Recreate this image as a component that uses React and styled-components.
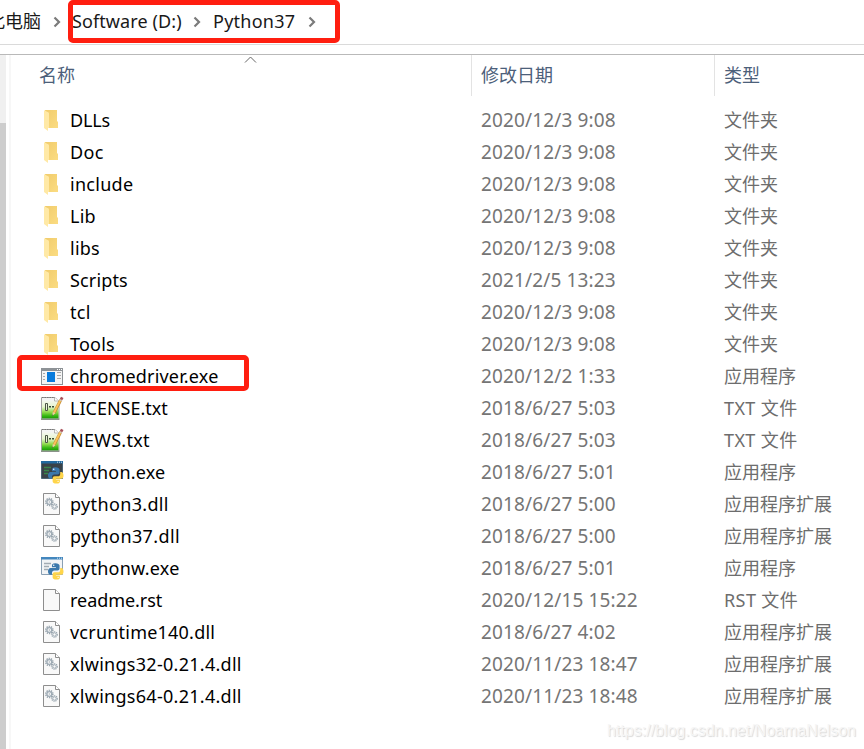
import styled, { createGlobalStyle } from "styled-components";

const GlobalStyle = createGlobalStyle`
  * {
    box-sizing: border-box;
  }
  body {
    margin: 0;
    overflow: hidden;
    background: #fff;
    font-family: "Noto Sans", "Noto Sans CJK SC", sans-serif;
    font-size: 18px;
  }
`;

const Window = styled.div`
  position: relative;
  display: flex;
  flex-direction: column;
  width: 864px;
  height: 749px;
  overflow: hidden;
  background: #fff;
`;

const AddressBar = styled.div`
  display: flex;
  align-items: center;
  height: 45px;
  padding-bottom: 2px;
  border-bottom: 1px solid #dadada;
`;

const Crumb = styled.span`
  flex: none;
  width: ${({ $width }) => $width}px;
  margin-left: ${({ $left }) => $left || 0}px;
  color: #191919;
  line-height: 26px;
  letter-spacing: ${({ $track }) => $track || 0}px;
  white-space: nowrap;
`;

const CrumbArrow = styled.svg`
  flex: none;
  width: 8px;
  height: 12px;
  margin-top: 2px;
`;

const Body = styled.div`
  display: flex;
  flex: 1;
  margin-top: 9px;
  border-top: 1px solid #b9b9b9;
`;

const ScrollTrack = styled.div`
  width: 6px;
  padding-top: 68px;
  background: #f0f0f0;
`;

const ScrollThumb = styled.div`
  height: 100%;
  background: #cdcdcd;
`;

const FileList = styled.div`
  flex: 1;
  margin-left: 3px;
  border-left: 2px solid #f7f7f7;
`;

const HeaderRow = styled.div`
  position: relative;
  display: grid;
  grid-template-columns: 461px 243px 1fr;
  height: 40px;
  margin-bottom: 9px;
`;

const HeaderCell = styled.div`
  padding-left: ${({ $pad }) => $pad}px;
  border-right: ${({ $last }) => ($last ? "none" : "1px solid #e3e3e3")};
  color: #4c607a;
  line-height: 41px;
`;

const SortArrow = styled.svg`
  position: absolute;
  top: 0;
  left: 233px;
  width: 13px;
  height: 9px;
`;

const Row = styled.div`
  display: grid;
  grid-template-columns: 30px 411px 243px 1fr;
  align-items: center;
  height: 32px;
  padding-left: 29px;
  line-height: 32px;
  white-space: nowrap;
`;

const FileIcon = styled.svg`
  width: 24px;
  height: 24px;
`;

const FileName = styled.span`
  color: #000;
  letter-spacing: ${({ $track }) => $track}px;
`;

const Detail = styled.span`
  color: #6d6d6d;
  letter-spacing: ${({ $track }) => $track || 0}px;
`;

const DateText = styled(Detail)`
  color: #757575;
  font-size: 19px;
`;

const Marker = styled.div`
  position: absolute;
  top: ${({ $top }) => $top}px;
  left: ${({ $left }) => $left}px;
  width: ${({ $width }) => $width}px;
  height: ${({ $height }) => $height}px;
  border: 5px solid #ff1e10;
  border-radius: 5px;
`;

const Watermark = styled.span`
  position: absolute;
  right: 8px;
  bottom: 8px;
  color: #f6f6f6;
  font-family: "Liberation Sans", Arial, sans-serif;
  font-size: 16px;
  line-height: 20px;
  text-shadow: 1px 1px 1px #d8d8d8;
`;

function FolderIcon() {
  return (
    <FileIcon viewBox="0 0 24 24">
      <defs>
        <linearGradient id="folderBack" x1="0" y1="0" x2="1" y2="1">
          <stop offset="0" stopColor="#f1cc6c" />
          <stop offset="1" stopColor="#fbdc82" />
        </linearGradient>
      </defs>
      <path d="M5 2h12v11l1 1v6H8z" fill="url(#folderBack)" />
      <path d="M4 2.2 8.2 4.3c.6.3.8.7.8 1.3V20H8v3l-4-3z" fill="#ffe9a6" />
    </FileIcon>
  );
}

function AppIcon() {
  return (
    <FileIcon viewBox="0 0 24 24">
      <rect x="1.5" y="4.5" width="21" height="16" fill="#f4f4f4" stroke="#8d9296" />
      <path d="M1 4h22v3H1z" fill="#8d9296" />
      <path d="M17 5h1v1h-1zM19 5h1v1h-1zM21 5h1v1h-1z" fill="#fff" />
      <path d="M7 8h8v10H7z" fill="#087bdc" />
      <path d="M3 9.5h2M3 12.5h2M3 15.5h2M17 8.5h4M17 11.5h4M17 14.5h4" stroke="#a8a8a8" />
    </FileIcon>
  );
}

function NotepadIcon() {
  return (
    <FileIcon viewBox="0 0 24 24">
      <defs>
        <linearGradient id="notepadGreen" x1="0" y1="0" x2="0" y2="1">
          <stop offset="0" stopColor="#f4f7ef" />
          <stop offset=".35" stopColor="#e6f4d0" />
          <stop offset=".65" stopColor="#8fd94b" />
          <stop offset=".85" stopColor="#36b812" />
          <stop offset="1" stopColor="#1c9606" />
        </linearGradient>
      </defs>
      <path d="M1.500 1.500H15l4 4v17.500H1.500z" fill="#f4f4f4" stroke="#a2a2a2" />
      <path d="M2 4.500h16.500V22.500H2z" fill="url(#notepadGreen)" />
      <path d="M2 1.500h13" stroke="#777" strokeDasharray="1.500 1" />
      <path d="M14.500 1.500v3.500h4" fill="#fff" stroke="#999" strokeWidth=".7" />
      <path d="M1 23.300h18.500" stroke="#7a8478" />
      <path d="M5.500 7.500h2v7h-2z" fill="#e8f3d8" stroke="#4b5544" />
      <path d="M9 10.700h2M12 10.700h2" stroke="#3b4a35" strokeWidth="1.500" />
      <path d="m20.800 3.700-6.600 13" stroke="#c08a35" strokeWidth="3" />
      <path d="m20.600 3.700-6.600 13" stroke="#fbc25a" strokeWidth="1.900" />
      <path d="m19.800 3 1.200-2.300 2.500 1.200-1.200 2.400z" fill="#a8505a" />
      <path d="m19.300 3.700 2.700 1.400" stroke="#c9c9cc" />
      <path d="m12.800 16-.6 4 3.200-2.700z" fill="#ecd0a2" />
      <path d="m12.400 18.500-.3 1.500 1.200-1z" fill="#333" />
    </FileIcon>
  );
}

function PythonIcon({ dark }) {
  return (
    <FileIcon viewBox="0 0 24 24">
      <path
        d="M1.500 1.500h21v17h-21z"
        fill={dark ? "#3a4248" : "#f2f4f6"}
        stroke={dark ? "#4d6474" : "#8aa0b4"}
      />
      <path d="M1 1h22v2.500H1z" fill={dark ? "#22699f" : "#4387be"} />
      <path d="M17 2.200h1M19 2.200h1M21 2.200h1" stroke="#cfe2f0" />
      <path
        d="M4 7.500h7M4 10.500h5M4 13.500h4"
        stroke={dark ? "#39864a" : "#a2abb3"}
        strokeWidth="1.300"
      />
      <g transform="translate(8 7.300) scale(.66)">
        <path
          d="M11 0c-4 0-5 1.500-5 3.500V6h6v1H4C1.500 7 0 9 0 12s1.400 5.500 4 5.500h2v-3c0-2 1.500-3.500 3.500-3.500h5c1.700 0 3-1.400 3-3V3.500C17.500 1.500 15 0 11 0z"
          fill="#3b78ac"
        />
        <path
          d="M13 24.500c4 0 5-1.500 5-3.500v-2.500h-6v-1h8c2.500 0 3.500-2 3.500-5s-1-5.500-3.500-5.500h-1.500v3c0 2-1.500 3.500-3.500 3.500h-5c-1.700 0-3 1.400-3 3V21c0 2 2 3.500 6 3.500z"
          fill="#ffd54a"
        />
        <circle cx="8.700" cy="3.100" r="1.100" fill="#fff" />
        <circle cx="15.300" cy="21.300" r="1.100" fill="#fff" />
      </g>
    </FileIcon>
  );
}

function PageIcon({ gears }) {
  return (
    <FileIcon viewBox="0 0 24 24">
      <path d="M3.500 1.500h12l4 4v17h-16z" fill="#f9f9f9" stroke="#8e8e8e" />
      <path d="M15.500 1.500v4h4" fill="#fff" stroke="#8e8e8e" />
      {gears && (
        <g fill="none">
          <circle cx="9.300" cy="10" r="3.500" stroke="#98a4ad" strokeWidth="1.600" strokeDasharray="1.300 .9" />
          <circle cx="9.300" cy="10" r="2.400" stroke="#9eabb5" strokeWidth="1.300" />
          <circle cx="9.300" cy="10" r=".7" fill="#9eabb5" />
          <circle cx="14.500" cy="14.500" r="2.700" stroke="#98a4ad" strokeWidth="1.300" strokeDasharray="1.200 .8" />
          <circle cx="14.500" cy="14.500" r="1.700" fill="#f9f9f9" stroke="#9eabb5" />
        </g>
      )}
    </FileIcon>
  );
}

const icons = {
  folder: <FolderIcon />,
  app: <AppIcon />,
  notepad: <NotepadIcon />,
  python: <PythonIcon dark />,
  pythonw: <PythonIcon />,
  dll: <PageIcon gears />,
  page: <PageIcon />,
};

const files = [
  { name: "DLLs", date: "2020/12/3 9:08", type: "文件夹", icon: "folder", track: -0.2 },
  { name: "Doc", date: "2020/12/3 9:08", type: "文件夹", icon: "folder", track: 0.3 },
  { name: "include", date: "2020/12/3 9:08", type: "文件夹", icon: "folder", track: 0.28 },
  { name: "Lib", date: "2020/12/3 9:08", type: "文件夹", icon: "folder", track: 0.2 },
  { name: "libs", date: "2020/12/3 9:08", type: "文件夹", icon: "folder", track: 0.25 },
  { name: "Scripts", date: "2021/2/5 13:23", type: "文件夹", icon: "folder", track: 0.15 },
  { name: "tcl", date: "2020/12/3 9:08", type: "文件夹", icon: "folder", track: 0.3 },
  { name: "Tools", date: "2020/12/3 9:08", type: "文件夹", icon: "folder", track: 0.2 },
  { name: "chromedriver.exe", date: "2020/12/2 1:33", type: "应用程序", icon: "app", track: 0.18 },
  { name: "LICENSE.txt", date: "2018/6/27 5:03", type: "TXT 文件", icon: "notepad", track: 0 },
  { name: "NEWS.txt", date: "2018/6/27 5:03", type: "TXT 文件", icon: "notepad", track: 0.25 },
  { name: "python.exe", date: "2018/6/27 5:01", type: "应用程序", icon: "python", track: 0.2 },
  { name: "python3.dll", date: "2018/6/27 5:00", type: "应用程序扩展", icon: "dll", track: 0.35 },
  { name: "python37.dll", date: "2018/6/27 5:00", type: "应用程序扩展", icon: "dll", track: 0.4 },
  { name: "pythonw.exe", date: "2018/6/27 5:01", type: "应用程序", icon: "pythonw", track: 0.25 },
  { name: "readme.rst", date: "2020/12/15 15:22", type: "RST 文件", icon: "page", track: -0.05 },
  { name: "vcruntime140.dll", date: "2018/6/27 4:02", type: "应用程序扩展", icon: "dll", track: 0.22 },
  { name: "xlwings32-0.21.4.dll", date: "2020/11/23 18:47", type: "应用程序扩展", icon: "dll", track: 0.28 },
  { name: "xlwings64-0.21.4.dll", date: "2020/11/23 18:48", type: "应用程序扩展", icon: "dll", track: 0.28 },
];

function Arrow() {
  return (
    <CrumbArrow viewBox="0 0 8 12">
      <path d="m1.500 1.500 4.500 4.500-4.500 4.500" fill="none" stroke="#7b7b7b" strokeWidth="2.200" />
    </CrumbArrow>
  );
}

function App() {
  return (
    <>
      <GlobalStyle />
      <Window>
        <AddressBar>
          <Crumb $left={-13} $width={66}>此电脑</Crumb>
          <Arrow />
          <Crumb $left={11} $width={121} $track={0.1}>Software (D:)</Crumb>
          <Arrow />
          <Crumb $left={12} $width={95} $track={0.25}>Python37</Crumb>
          <Arrow />
        </AddressBar>
        <Body>
          <ScrollTrack>
            <ScrollThumb />
          </ScrollTrack>
          <FileList>
            <HeaderRow>
              <HeaderCell $pad={28}>名称</HeaderCell>
              <HeaderCell $pad={9}>修改日期</HeaderCell>
              <HeaderCell $pad={9} $last>类型</HeaderCell>
              <SortArrow viewBox="0 0 13 9">
                <path d="m1 7.500 5.500-5.500L12 7.500" fill="none" stroke="#666" />
              </SortArrow>
            </HeaderRow>
            {files.map((file) => (
              <Row key={file.name}>
                {icons[file.icon]}
                <FileName $track={file.track}>{file.name}</FileName>
                <DateText $track={0.14}>{file.date}</DateText>
                <Detail $track={file.type.includes(" ") ? 0.4 : 0}>{file.type}</Detail>
              </Row>
            ))}
          </FileList>
        </Body>
        <Marker $top={0} $left={68} $width={272} $height={43} />
        <Marker $top={355} $left={17} $width={232} $height={36} />
        <Watermark>https://blog.csdn.net/NoamaNelson</Watermark>
      </Window>
    </>
  );
}

export default App;
